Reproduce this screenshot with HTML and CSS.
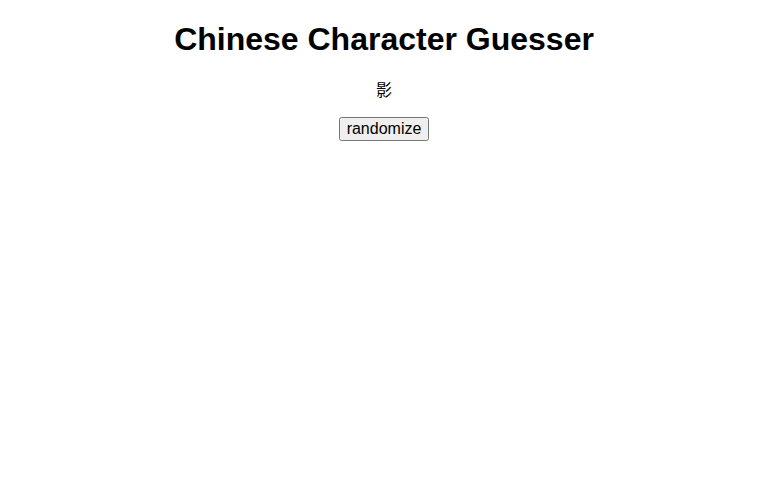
FILE: index.html
```html
<!DOCTYPE html>
<html lang="en">
<head>
  <meta charset="UTF-8">
  <meta name="viewport" content="width=device-width, initial-scale=1.0">
  <title>Chinese Character Guesser</title>
  <link rel="stylesheet" href="styles.css">
  <script>
    const characters = ["影", "山", "水", "火", "木", "月", "日", "雨", "风", "花"];

    function randomize() {
      const pick = characters[Math.floor(Math.random() * characters.length)];
      document.getElementById("character").textContent = pick;
    }
  </script>
</head>
<body>
  <div class="app">
    <h1>Chinese Character Guesser</h1>
    <p id="character" class="character">影</p>
    <button class="button" onclick="randomize()">randomize</button>
  </div>
</body>
</html>
```

FILE: styles.css
```css
body {
  margin: 0;
  font-family: "Liberation Sans", "Noto Sans CJK SC", Arial, sans-serif;
  background-color: #fff;
  color: #000;
}
.app {
  text-align: center;
}
.character {
  font-size: 16px;
  line-height: 21px;
}
.button {
  font-family: "Liberation Sans", Arial, sans-serif;
  font-size: 16px;
}
```
